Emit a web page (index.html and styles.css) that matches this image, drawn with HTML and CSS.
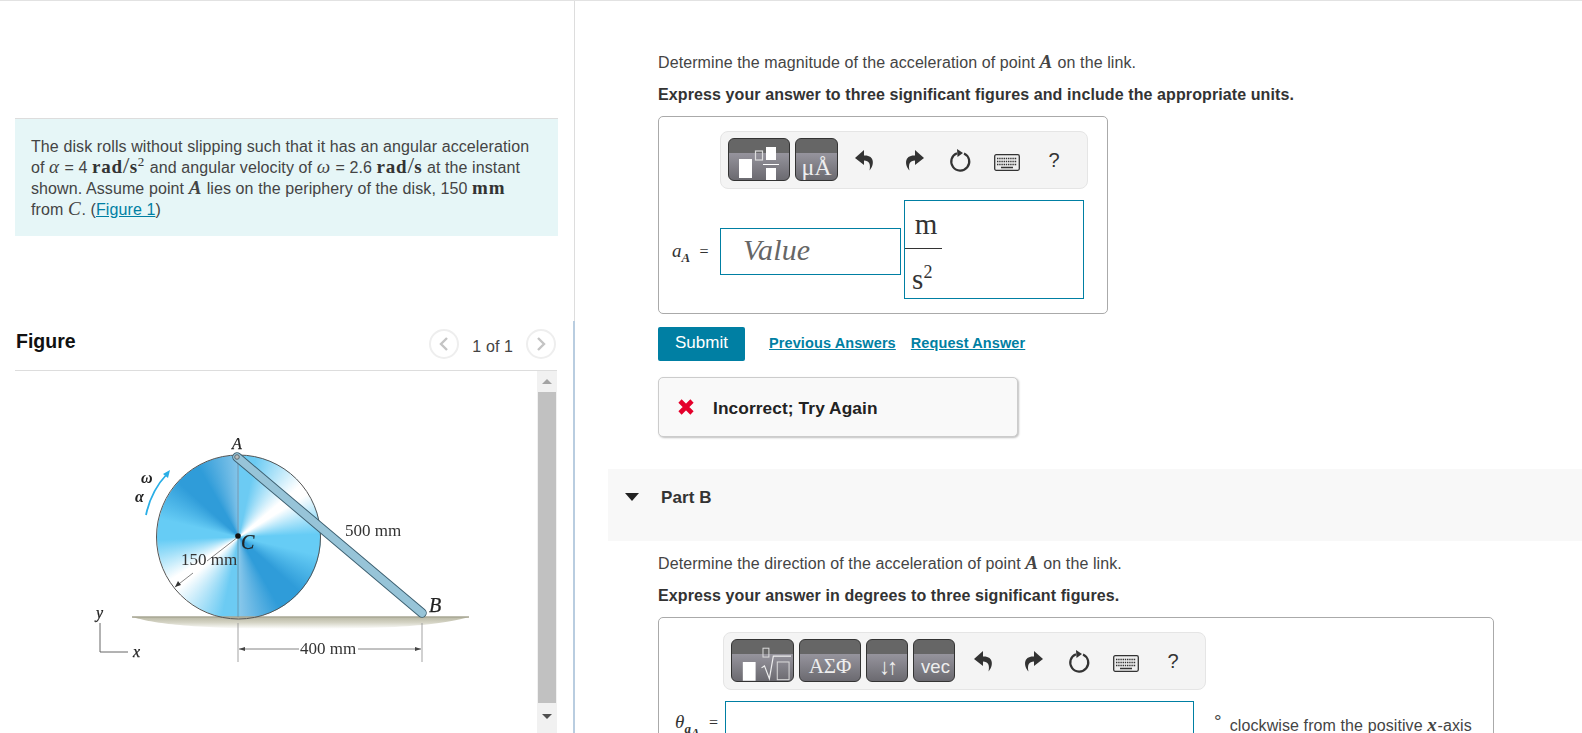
FILE: index.html
```html
<!DOCTYPE html>
<html lang="en">
<head>
    <meta charset="UTF-8">
    <meta name="viewport" content="width=device-width, initial-scale=1.0">
    <title>Rolling Disk Problem</title>
    <link rel="stylesheet" href="styles.css">
</head>
<body>
    <svg class="icon-defs" width="0" height="0">
        <symbol id="i-undo" viewBox="0 0 24 24"><path d="M10 2 L1 10 L10 17 V12.5 C15 12.5 17 16 15.5 22.5 C20.5 17 21 7 10 7.5 Z"/></symbol>
        <symbol id="i-redo" viewBox="0 0 24 24"><path d="M14 2 L23 10 L14 17 V12.5 C9 12.5 7 16 8.5 22.5 C3.5 17 3 7 14 7.5 Z"/></symbol>
        <symbol id="i-reset" viewBox="0 0 24 24"><path d="M16 5.4 A9 9 0 1 1 9 5.2" fill="none" stroke="#333" stroke-width="2.2"/><path d="M9 1 L15 5 L9.5 9 Z"/></symbol>
        <symbol id="i-keys" viewBox="0 0 26 17">
            <rect x="0.7" y="0.7" width="24.6" height="15.6" rx="1.5" fill="#eee" stroke="#333" stroke-width="1.3"/>
            <path d="M3 4.5 H23 M3 7.5 H23 M3 10.5 H23" stroke="#333" stroke-width="1.5" stroke-dasharray="1.4 .8"/>
            <path d="M7 13.5 H19" stroke="#333" stroke-width="1.5"/>
        </symbol>
    </svg>

    <div class="page">
        <aside class="left">
            <section class="intro-wrap">
                <div class="intro">
                    The disk rolls without slipping such that it has an angular acceleration<br>
                    of <i class="mv">α</i> = 4 <span class="mu">rad</span><span class="mslash">/</span><span class="mu">s<sup>2</sup></span> and angular velocity of <i class="mv">ω</i> = 2.6 <span class="mu">rad</span><span class="mslash">/</span><span class="mu">s</span> at the instant<br>
                    shown. Assume point <i class="mv mb">A</i> lies on the periphery of the disk, 150 <span class="mu">mm</span><br>
                    from <i class="mv">C</i>. (<a href="#">Figure 1</a>)
                </div>
            </section>

            <section class="figure">
                <div class="figure-head">
                    <h2>Figure</h2>
                    <div class="pager">
                        <button class="pager-btn"><svg width="10" height="16" viewBox="0 0 10 16"><path d="M8 2 L2 8 L8 14" fill="none" stroke="#c4c4c4" stroke-width="2.4"/></svg></button>
                        <span class="pager-text">1 of 1</span>
                        <button class="pager-btn"><svg width="10" height="16" viewBox="0 0 10 16"><path d="M2 2 L8 8 L2 14" fill="none" stroke="#c4c4c4" stroke-width="2.4"/></svg></button>
                    </div>
                </div>
                <div class="figure-body">
                    <div class="canvas">
                        <div class="disk"></div>
                        <svg class="drawing" width="522" height="362" viewBox="15 371 522 362">
                            <defs>
                                <linearGradient id="ground" x1="0" y1="0" x2="0" y2="1">
                                    <stop offset="0" stop-color="#b9b8a4"/>
                                    <stop offset="0.45" stop-color="#d4d3c4"/>
                                    <stop offset="1" stop-color="#ffffff"/>
                                </linearGradient>
                            </defs>
                            <path d="M132 617 H469 C450 622 420 629 300 629 C180 629 150 622 132 617 Z" fill="url(#ground)"/>
                            <path d="M132 617 H469" stroke="#a8a794" stroke-width="1.4"/>
                            <circle cx="238.5" cy="537" r="82" fill="none" stroke="#555" stroke-width="1"/>
                            <path d="M238 457 V617" stroke="#6b8ea3" stroke-width="0.8"/>
                            <path d="M238 537 L207 561 M193 573 L175 587" stroke="#666" stroke-width="0.8"/>
                            <path d="M175 587 L181 585 L178 581 Z" fill="#333"/>
                            <path d="M237 457 L422 613" stroke="#3c5f70" stroke-width="9.5" stroke-linecap="round"/>
                            <path d="M237 457 L422 613" stroke="#97c4d8" stroke-width="7.6" stroke-linecap="round"/>
                            <circle cx="237" cy="457" r="2.3" fill="#b8bcbc" stroke="#5d6a70" stroke-width="1"/>
                            <circle cx="238" cy="536" r="2.8" fill="#111"/>
                            <path d="M146 515 Q151 491 167 474" fill="none" stroke="#29aee6" stroke-width="1.8"/>
                            <path d="M170 470 L163 474 L168 478 Z" fill="#29aee6"/>
                            <path d="M100 623 V652 H128" fill="none" stroke="#555" stroke-width="0.9"/>
                            <path d="M238 623 V662 M422 623 V662" stroke="#999" stroke-width="0.9"/>
                            <path d="M239 649 H299 M358 649 H421" stroke="#777" stroke-width="0.9"/>
                            <path d="M239 649 L245 647 V651 Z M421 649 L415 647 V651 Z" fill="#444"/>
                            <text class="lbl-i" x="232" y="449">A</text>
                            <text class="lbl-i lbl-big" x="241" y="549">C</text>
                            <text class="lbl-i lbl-big" x="429" y="612">B</text>
                            <text class="lbl-i lbl-greek" x="141" y="483">ω</text>
                            <text class="lbl-i lbl-greek" x="135" y="502">α</text>
                            <text class="lbl-i" x="96" y="618">y</text>
                            <text class="lbl-i" x="133" y="657">x</text>
                            <text class="lbl" x="345" y="536">500 mm</text>
                            <text class="lbl" x="181" y="565">150 mm</text>
                            <text class="lbl" x="300" y="654">400 mm</text>
                        </svg>
                    </div>
                    <div class="scrollbar">
                        <div class="scroll-btn"><span class="tri-up"></span></div>
                        <div class="scroll-thumb"></div>
                        <div class="scroll-btn"><span class="tri-down"></span></div>
                    </div>
                </div>
            </section>
        </aside>

        <main class="right">
            <div class="part">
                <p class="prompt">Determine the magnitude of the acceleration of point <i class="mv mb">A</i> on the link.</p>
                <p class="prompt-bold">Express your answer to three significant figures and include the appropriate units.</p>

                <div class="answer answer-a">
                    <div class="toolbar">
                        <button class="tool tool-wide">
                            <svg width="60" height="41" viewBox="0 0 60 41"><path d="M10 20 H23 V39 H10 Z M37 8 H47 V21 H37 Z M37 29 H47 V41 H37 Z M34 25 H50 V26 H34 Z" fill="#fff"/><rect x="26.5" y="12" width="7" height="9" fill="none" stroke="#ddd" stroke-width="1.2"/></svg>
                        </button>
                        <button class="tool tool-units">μÅ</button>
                        <span class="tool-icons">
                            <svg class="ic"><use href="#i-undo"/></svg>
                            <svg class="ic"><use href="#i-redo"/></svg>
                            <svg class="ic"><use href="#i-reset"/></svg>
                            <svg class="ic ic-keys"><use href="#i-keys"/></svg>
                            <span class="ic-help">?</span>
                        </span>
                    </div>
                    <div class="entry">
                        <span class="var"><i>a<sub>A</sub></i> =</span>
                        <span class="value-box">Value</span>
                        <span class="unit-box">
                            <span class="frac">
                                <span class="frac-top">m</span>
                                <span class="frac-bot">s<sup>2</sup></span>
                            </span>
                        </span>
                    </div>
                </div>

                <div class="actions">
                    <button class="submit">Submit</button>
                    <a href="#" class="act-link first">Previous Answers</a>
                    <a href="#" class="act-link">Request Answer</a>
                </div>

                <div class="feedback">
                    <svg width="18" height="18" viewBox="0 0 18 18"><path d="M3 3 L15 15 M15 3 L3 15" stroke="#e4002b" stroke-width="4.6"/></svg>
                    <span class="feedback-text">Incorrect; Try Again</span>
                </div>
            </div>

            <div class="part-head">
                <span class="part-tri"></span>
                <span>Part B</span>
            </div>

            <div class="part part-b">
                <p class="prompt">Determine the direction of the acceleration of point <i class="mv mb">A</i> on the link.</p>
                <p class="prompt-bold">Express your answer in degrees to three significant figures.</p>

                <div class="answer answer-b">
                    <div class="toolbar">
                        <button class="tool tool-root">
                            <svg width="62" height="41" viewBox="0 0 62 41"><path d="M11 22 H24 V41 H11 Z" fill="#fff"/><path d="M30 28 L33 26 L38 39 L42 16 H60" fill="none" stroke="#eee" stroke-width="1.2"/><rect x="31.5" y="8" width="6" height="9" fill="none" stroke="#ddd" stroke-width="1"/><rect x="46" y="22" width="12" height="18" fill="none" stroke="#ddd" stroke-width="1"/></svg>
                        </button>
                        <button class="tool tool-greek">ΑΣΦ</button>
                        <button class="tool tool-arrows">↓↑</button>
                        <button class="tool tool-vec">vec</button>
                        <span class="tool-icons">
                            <svg class="ic"><use href="#i-undo"/></svg>
                            <svg class="ic"><use href="#i-redo"/></svg>
                            <svg class="ic"><use href="#i-reset"/></svg>
                            <svg class="ic ic-keys"><use href="#i-keys"/></svg>
                            <span class="ic-help">?</span>
                        </span>
                    </div>
                    <div class="entry entry-b">
                        <span class="var"><i>θ<sub>a<sub>A</sub></sub></i> =</span>
                        <span class="angle-box"></span>
                        <span class="deg">°</span>
                        <span class="after">clockwise from the positive <i class="mv mb">x</i>-axis</span>
                    </div>
                </div>
            </div>
        </main>
    </div>
</body>
</html>
```

FILE: styles.css
```css
html, body { margin: 0; height: 100%; overflow: hidden; background: #fff; }
body { font-family: "Liberation Sans", Arial, sans-serif; font-size: 16px; letter-spacing: 0.1px; color: #444; }
p, h2 { margin: 0; }
a { color: #007fa3; }
button { font-family: inherit; }
.icon-defs { position: absolute; }

.page { display: grid; grid-template-columns: 575px 1fr; height: 733px; overflow: hidden; border-top: 1px solid #e2e2e2; box-sizing: border-box; }

/* left column */
.left { display: flex; flex-direction: column; min-width: 0; }
.intro-wrap { height: 320px; box-sizing: border-box; padding: 117px 16px 0 15px; border-right: 1px solid #ddd; }
.intro { height: 118px; box-sizing: border-box; background: #e6f6f7; border-top: 1px solid #ddd; padding: 17px 0 0 16px; line-height: 21px; color: #444; white-space: nowrap; }
.mv { font-family: "Liberation Serif", serif; font-size: 19px; letter-spacing: 0.8px; line-height: 0; }
.mb { font-weight: bold; }
.mu { font-family: "Liberation Serif", serif; font-size: 19px; font-weight: bold; color: #333; letter-spacing: 0.8px; line-height: 0; }
.mu sup { font-size: 13px; font-weight: normal; line-height: 0; }
.mslash { font-family: "Liberation Serif", serif; font-size: 24px; line-height: 0; }

.figure { flex: 1; display: flex; flex-direction: column; min-height: 0; border-right: 2px solid #b9cde0; }
.figure-head { height: 50px; box-sizing: border-box; margin: 0 16px 0 15px; display: flex; align-items: center; justify-content: space-between; border-bottom: 1px solid #ddd; padding-right: 1px; }
.figure-head h2 { font-size: 19.5px; color: #111; margin-top: -8px; margin-left: 1px; letter-spacing: 0; }
.pager { display: flex; align-items: center; gap: 13px; color: #444; margin-top: -4px; }
.pager-text { padding-top: 7px; }
.pager-btn { width: 30px; height: 30px; border-radius: 50%; border: 2px solid #eee; background: #fff; padding: 0; display: flex; align-items: center; justify-content: center; }

.figure-body { flex: 1; display: flex; min-height: 0; padding-right: 16px; }
.canvas { position: relative; width: 522px; margin-left: 15px; overflow: hidden; }
.drawing { position: absolute; left: 0; top: 0; filter: blur(0.3px); }
.disk { position: absolute; left: 141.5px; top: 84px; width: 164px; height: 164px; border-radius: 50%; filter: blur(0.4px);
    background: conic-gradient(
        #6ccbf3 0deg, #6ccbf3 12deg, #ffffff 50deg, #ffffff 58deg, #66ccf5 88deg, #66ccf5 103deg, #2f9cd9 132deg, #2f9cd9 150deg, #86c6ea 179deg,
        #6ccbf3 180deg, #6ccbf3 192deg, #ffffff 230deg, #ffffff 238deg, #66ccf5 268deg, #66ccf5 283deg, #2f9cd9 312deg, #2f9cd9 330deg, #86c6ea 360deg); }
.lbl { font-family: "Liberation Serif", serif; font-size: 17px; fill: #333; letter-spacing: 0; }
.lbl-i { font-family: "Liberation Serif", serif; font-style: italic; font-size: 16px; fill: #222; stroke: #222; stroke-width: 0.25px; }
.lbl-big { font-size: 20px; }
.lbl-greek { font-weight: bold; stroke-width: 0; }

.scrollbar { width: 20px; background: #f1f1f1; display: flex; flex-direction: column; }
.scroll-btn { height: 21px; display: flex; align-items: center; justify-content: center; }
.scroll-thumb { height: 311px; margin: 0 1px; background: #c1c1c1; }
.tri-up { border: 5px solid transparent; border-top: 0; border-bottom: 5px solid #a3a3a3; }
.tri-down { border: 5px solid transparent; border-bottom: 0; border-top: 5px solid #505050; margin-top: 5px; }

/* right column */
.right { min-width: 0; padding-left: 33px; }
.part { padding: 52px 0 0 50px; }
.prompt { line-height: 20px; color: #444; }
.prompt-bold { font-weight: bold; line-height: 20px; margin-top: 12px; color: #333; }
.answer { box-sizing: border-box; border: 1px solid #aaa; border-radius: 5px; background: #fff; }
.answer-a { width: 450px; height: 198px; margin-top: 11px; padding: 14px 0 0 61px; }
.answer-b { width: 836px; margin-top: 11px; height: 200px; padding: 14px 0 0 64px; }

.toolbar { display: inline-flex; align-items: center; height: 58px; box-sizing: border-box; background: #f4f4f4; border: 1px solid #e5e5e5; border-radius: 8px; padding: 0 7px; gap: 5px; letter-spacing: 0; }
.answer-a .toolbar { width: 368px; }
.answer-b .toolbar { width: 483px; }
.tool { height: 43px; margin-top: -1px; box-sizing: border-box; border: 1px solid #333; border-radius: 6px; padding: 0; color: #fff; overflow: hidden; display: flex; align-items: flex-end; justify-content: center; background: linear-gradient(#666 0, #666 34%, #96949d 34%, #6b6a70 100%); }
.tool-wide { width: 62px; }
.tool-units { width: 43px; font-family: "Liberation Serif", serif; font-size: 24px; line-height: 26px; color: #eee; }
.tool-root { width: 63px; }
.tool-greek { width: 62px; font-family: "Liberation Serif", serif; font-size: 21px; line-height: 30px; color: #eee; }
.tool-arrows { width: 42px; font-size: 22px; line-height: 28px; color: #eee; letter-spacing: -3px; }
.tool-vec { width: 42px; font-size: 18.5px; line-height: 28px; color: #eee; padding-left: 3px; }
.tool-icons { flex: 1; display: flex; align-items: center; gap: 23px; padding-left: 11px; }
.answer-b .tool-icons { padding-left: 13px; }
.ic { width: 24px; height: 24px; flex-shrink: 0; fill: #333; }
.ic-keys { width: 26px; height: 17px; margin: 5px -1px 0; }
.ic-help { font-size: 20px; color: #333; width: 24px; text-align: center; }

.entry { display: flex; align-items: center; margin: 11px 0 0 -48px; height: 99px; }
.var { width: 48px; font-family: "Liberation Serif", serif; font-size: 16px; color: #333; box-sizing: border-box; white-space: nowrap; word-spacing: 5px; padding-top: 2px; }
.var i { font-size: 19px; }
.var sub { font-size: 13px; line-height: 0; font-weight: bold; }
.value-box { width: 181px; height: 47px; margin-top: 3px; box-sizing: border-box; border: 1.5px solid #007fa3; font-family: "Liberation Serif", serif; font-style: italic; font-size: 30px; color: #666; padding: 4px 0 0 22px; }
.unit-box { width: 180px; height: 99px; box-sizing: border-box; border: 1.5px solid #007fa3; margin-left: 3px; font-family: "Liberation Serif", serif; font-size: 29px; color: #333; }
.frac { display: flex; flex-direction: column; width: 37px; }
.frac-top { height: 47px; line-height: 46px; text-align: center; border-bottom: 1px solid #333; padding-left: 5px; }
.frac-bot { line-height: 60px; padding-left: 7px; white-space: nowrap; }
.frac-bot sup { font-size: 18px; line-height: 0; }

.actions { display: flex; align-items: center; margin-top: 13px; height: 34px; }
.submit { width: 87px; height: 34px; background: #007fa3; color: #fff; border: 0; border-radius: 2px; font-size: 17px; padding: 0 0 2px; }
.act-link { font-size: 14.5px; font-weight: bold; margin-left: 15px; margin-top: -3px; }
.act-link.first { margin-left: 24px; }

.feedback { display: flex; align-items: center; gap: 18px; box-sizing: border-box; width: 360px; height: 60px; margin-top: 16px; padding-left: 18px; background: #f9f9f9; border: 1px solid #ccc; border-radius: 5px; box-shadow: 1px 1px 2px rgba(0, 0, 0, 0.25); font-size: 17.3px; font-weight: bold; color: #222; }
.feedback-text { padding-top: 2px; }

.part-head { display: flex; align-items: flex-start; height: 72px; padding-top: 19px; box-sizing: border-box; margin-top: 32px; background: #f8f8f8; font-size: 17px; font-weight: bold; color: #333; }
.part-tri { border: 7px solid transparent; border-bottom: 0; border-top: 8px solid #222; margin: 5px 22px 0 17px; }
.part-b { padding-top: 13px; }

.entry-b { height: 60px; align-items: flex-start; margin-top: 11px; }
.entry-b .var { padding-top: 10px; }
.angle-box { width: 469px; height: 50px; box-sizing: border-box; border: 1.5px solid #007fa3; margin-left: 2px; }
.deg { font-size: 19px; margin-left: 20px; margin-top: 10px; }
.after { margin-left: 8px; margin-top: 16px; white-space: nowrap; }
```
